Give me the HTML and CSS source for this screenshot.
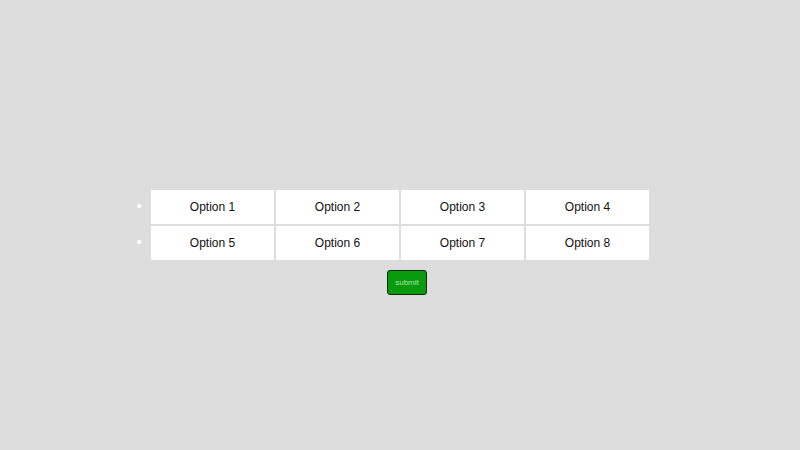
FILE: index.html
```html
<!DOCTYPE html>
<html lang="en">
<head>
    <meta charset="UTF-8">
    <meta name="viewport" content="width=device-width, initial-scale=1.0">
    <title>Options</title>
    <link rel="stylesheet" href="styles.css">
</head>
<body>
    <form class="picker">
        <ul class="options">
            <li>
                <div class="row">
                    <div class="cell">Option 1</div>
                    <div class="cell">Option 2</div>
                    <div class="cell">Option 3</div>
                    <div class="cell">Option 4</div>
                </div>
            </li>
            <li>
                <div class="row">
                    <div class="cell">Option 5</div>
                    <div class="cell">Option 6</div>
                    <div class="cell">Option 7</div>
                    <div class="cell">Option 8</div>
                </div>
            </li>
        </ul>
        <button type="submit" class="submit">submit</button>
    </form>
</body>
</html>
```

FILE: styles.css
```css
body {
    margin: 0;
    min-height: 450px;
    background-color: #dddddd;
    font-family: "Liberation Sans", Arial, sans-serif;
    display: flex;
    justify-content: center;
    align-items: center;
    padding-top: 34px;
    box-sizing: border-box;
}
.picker {
    display: flex;
    flex-direction: column;
    align-items: center;
}
.options {
    width: 500px;
    margin: 0;
    padding: 0;
    font-size: 12px;
}
.options li::marker {
    content: "\2022   ";
    font-size: 15px;
    color: #ffffff;
}
.row {
    display: flex;
}
.cell {
    width: 125px;
    height: 36px;
    box-sizing: border-box;
    border: 1px solid #dddddd;
    background-color: #ffffff;
    color: #111111;
    display: flex;
    align-items: center;
    justify-content: center;
}
.submit {
    margin-top: 9px;
    margin-left: 14px;
    width: 40px;
    height: 25px;
    padding: 0;
    background-color: #0a9a0e;
    color: #a8e8a8;
    border: 1px solid #102a10;
    border-radius: 3px;
    font-family: "Liberation Sans", Arial, sans-serif;
    font-size: 8px;
    cursor: pointer;
}
```
